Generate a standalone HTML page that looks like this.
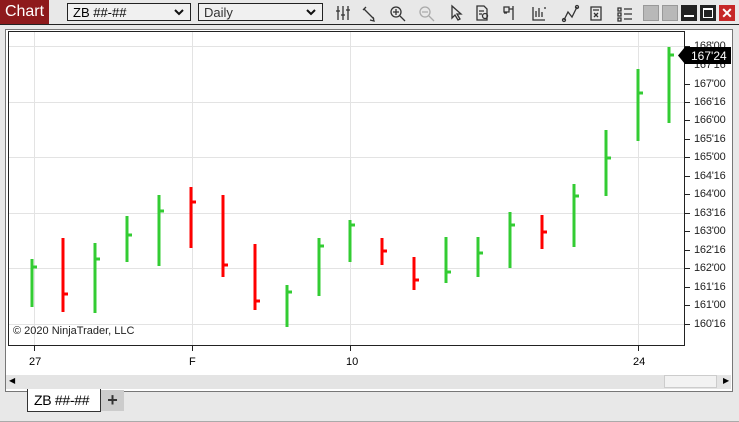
<!DOCTYPE html><html><head><style>
html,body{margin:0;width:739px;height:422px;overflow:hidden}
body{background:#e8e8e8;font-family:"Liberation Sans",sans-serif;position:relative}
.a{position:absolute}
.dd{position:absolute;top:3px;height:18px;border:1px solid #222;background:#f0f0f0;font-size:13px;line-height:17px;padding-left:5px;box-sizing:border-box}
.dd svg{position:absolute;right:6px;top:5px}
.wb{position:absolute;top:5px;width:16px;height:16px;box-sizing:border-box}
.pl{position:absolute;left:694px;font-size:11px;color:#222;letter-spacing:-0.2px}
.tk{position:absolute;left:685px;width:5px;height:1px;background:#222}
</style></head><body>
<div class="a" style="left:0;top:0;width:49px;height:24px;background:#8e1a1c;color:#fff;font-size:16px;line-height:24px;text-align:center">Chart</div>
<div class="dd" style="left:67px;width:124px">ZB ##-##<svg width="10" height="7"><path d="M1 1l4 4 4-4" stroke="#111" stroke-width="2" fill="none"/></svg></div>
<div class="dd" style="left:198px;width:125px;color:#333">Daily<svg width="10" height="7"><path d="M1 1l4 4 4-4" stroke="#111" stroke-width="2" fill="none"/></svg></div>
<svg class="a" style="left:330px;top:3px" width="310" height="20" fill="none" stroke="#333" stroke-width="1.3">
<path d="M8 3v14M13 3v14M18 3v14M6 8h4M11 12h4M16 7h4"/>
<path d="M34 6l10 10M33 7l3-3M40 17l4 1-1-4"/>
<circle cx="66" cy="9" r="5"/><path d="M70 13l5 5M63 9h6M66 6v6"/>
<circle cx="95" cy="9" r="5" stroke="#aaa"/><path d="M99 13l5 5M92 9h6" stroke="#aaa"/>
<path d="M122 3l0 12 3-3 3 5 2-1-3-5 4 0z"/>
<path d="M147 3h7l3 3v11h-10zM149 8h5M149 11h3"/><circle cx="155" cy="13" r="2.5"/>
<path d="M174 4h5v5h-5zM179 6h4M183 3v14M174 10h3"/>
<path d="M203 4v13h12M206 14v-6M209 14v-9M212 14v-5M215 4v2"/>
<path d="M234 17l4-8 4 5 5-10"/><circle cx="234" cy="17" r="1.5"/><circle cx="247" cy="4" r="1.5"/>
<path d="M261 4h10v13h-10zM263 7h6M264 10l4 4M268 10l-4 4"/>
<path d="M288 5h3v3h-3zM288 10h3v3h-3zM288 15h3v3h-3zM294 6h8M294 11h8M294 16h8"/>
</svg>
<div class="wb" style="left:643px;background:#b8b8b8;border:1px solid #999"></div>
<div class="wb" style="left:662px;background:#b8b8b8;border:1px solid #999"></div>
<div class="wb" style="left:681px;background:#222"><div class="a" style="left:3px;top:10px;width:10px;height:2px;background:#fff"></div></div>
<div class="wb" style="left:700px;background:#222"><div class="a" style="left:3px;top:3px;width:10px;height:10px;border:1px solid #fff;border-top-width:2px;box-sizing:border-box"></div></div>
<div class="wb" style="left:719px;background:#c62828;color:#fff;font-size:14px;line-height:16px;text-align:center;font-weight:bold">&#10005;</div>
<div class="a" style="left:0;top:24px;width:739px;height:1px;background:#222"></div>
<div class="a" style="left:5px;top:29px;width:726px;height:361px;background:#fff;border:1px solid #777"></div>
<svg class="a" style="left:0;top:0" width="739" height="422">
<rect x="8.5" y="31.5" width="676" height="314" fill="none" stroke="#222"/>
<g stroke="#e3e3e3"><path d="M9 46.5h675M9 102.5h675M9 157.5h675M9 213.5h675M9 268.5h675M9 324.5h675M34.5 32v313M192.5 32v313M350.5 32v313M638.5 32v313"/></g>
<g stroke="#222"><path d="M34.5 346v5M192.5 346v5M350.5 346v5M638.5 346v5"/></g>
<g stroke-width="3">
<path stroke="#33cc33" d="M32 259v48M95 243v70M127 216v46M159 195v71M287 285v42M319 238v58M350 220v42M446 237v46M478 237v40M510 212v56M574 184v63M606 130v66M638 69v72M669 47v76"/>
<path stroke="#33cc33" d="M33 267h4M96 259h4M128 235h4M160 211h4M288 292h4M320 246h4M351 225h4M447 272h4M479 253h4M511 225h4M575 196h4M607 158h4M639 93h4M670 55h4"/>
<path stroke="#ff0000" d="M63 238v74M191 187v61M223 195v82M255 244v66M382 238v27M414 257v33M542 215v34"/>
<path stroke="#ff0000" d="M64 294h4M192 202h4M224 265h4M256 301h4M383 251h4M415 280h4M543 232h4"/>
</g>
</svg>
<div class="tk" style="top:46px"></div><div class="tk" style="top:84px"></div><div class="tk" style="top:102px"></div><div class="tk" style="top:120px"></div><div class="tk" style="top:139px"></div><div class="tk" style="top:157px"></div><div class="tk" style="top:176px"></div><div class="tk" style="top:194px"></div><div class="tk" style="top:213px"></div><div class="tk" style="top:231px"></div><div class="tk" style="top:250px"></div><div class="tk" style="top:268px"></div><div class="tk" style="top:287px"></div><div class="tk" style="top:305px"></div><div class="tk" style="top:324px"></div>
<div class="pl" style="top:40px">168'00</div><div class="pl" style="top:59px">167'16</div><div class="pl" style="top:78px">167'00</div><div class="pl" style="top:96px">166'16</div><div class="pl" style="top:114px">166'00</div><div class="pl" style="top:133px">165'16</div><div class="pl" style="top:151px">165'00</div><div class="pl" style="top:170px">164'16</div><div class="pl" style="top:188px">164'00</div><div class="pl" style="top:207px">163'16</div><div class="pl" style="top:225px">163'00</div><div class="pl" style="top:244px">162'16</div><div class="pl" style="top:262px">162'00</div><div class="pl" style="top:281px">161'16</div><div class="pl" style="top:299px">161'00</div><div class="pl" style="top:318px">160'16</div>
<svg class="a" style="left:678px;top:47px" width="53" height="17"><path d="M0 8.5L7 0H53V17H7z" fill="#000"/><text x="13" y="13" fill="#fff" font-size="12" font-family="Liberation Sans">167'24</text></svg>
<div class="a" style="left:13px;top:325px;font-size:11px;color:#222">© 2020 NinjaTrader, LLC</div>
<div class="a" style="left:29px;top:356px;font-size:11px">27</div>
<div class="a" style="left:189px;top:356px;font-size:11px">F</div>
<div class="a" style="left:346px;top:356px;font-size:11px">10</div>
<div class="a" style="left:633px;top:356px;font-size:11px">24</div>
<div class="a" style="left:6px;top:375px;width:725px;height:14px;background:#e4e4e4"></div>
<div class="a" style="left:9px;top:376px;font-size:8px">&#9664;</div>
<div class="a" style="left:723px;top:376px;font-size:8px">&#9654;</div>
<div class="a" style="left:664px;top:375px;width:53px;height:13px;background:#f2f2f2;border:1px solid #ccc;box-sizing:border-box"></div>
<div class="a" style="left:27px;top:389px;width:74px;height:23px;background:#fff;border:1px solid #333;border-top:none;box-sizing:border-box;font-size:14px;line-height:23px;padding-left:6px;white-space:nowrap;letter-spacing:-0.3px">ZB ##-##</div>
<div class="a" style="left:101px;top:390px;width:23px;height:21px;background:#ccc;font-size:18px;line-height:21px;text-align:center;font-weight:bold;color:#333">+</div>
<div class="a" style="left:0;top:421px;width:739px;height:1px;background:#aaa"></div>
</body></html>
